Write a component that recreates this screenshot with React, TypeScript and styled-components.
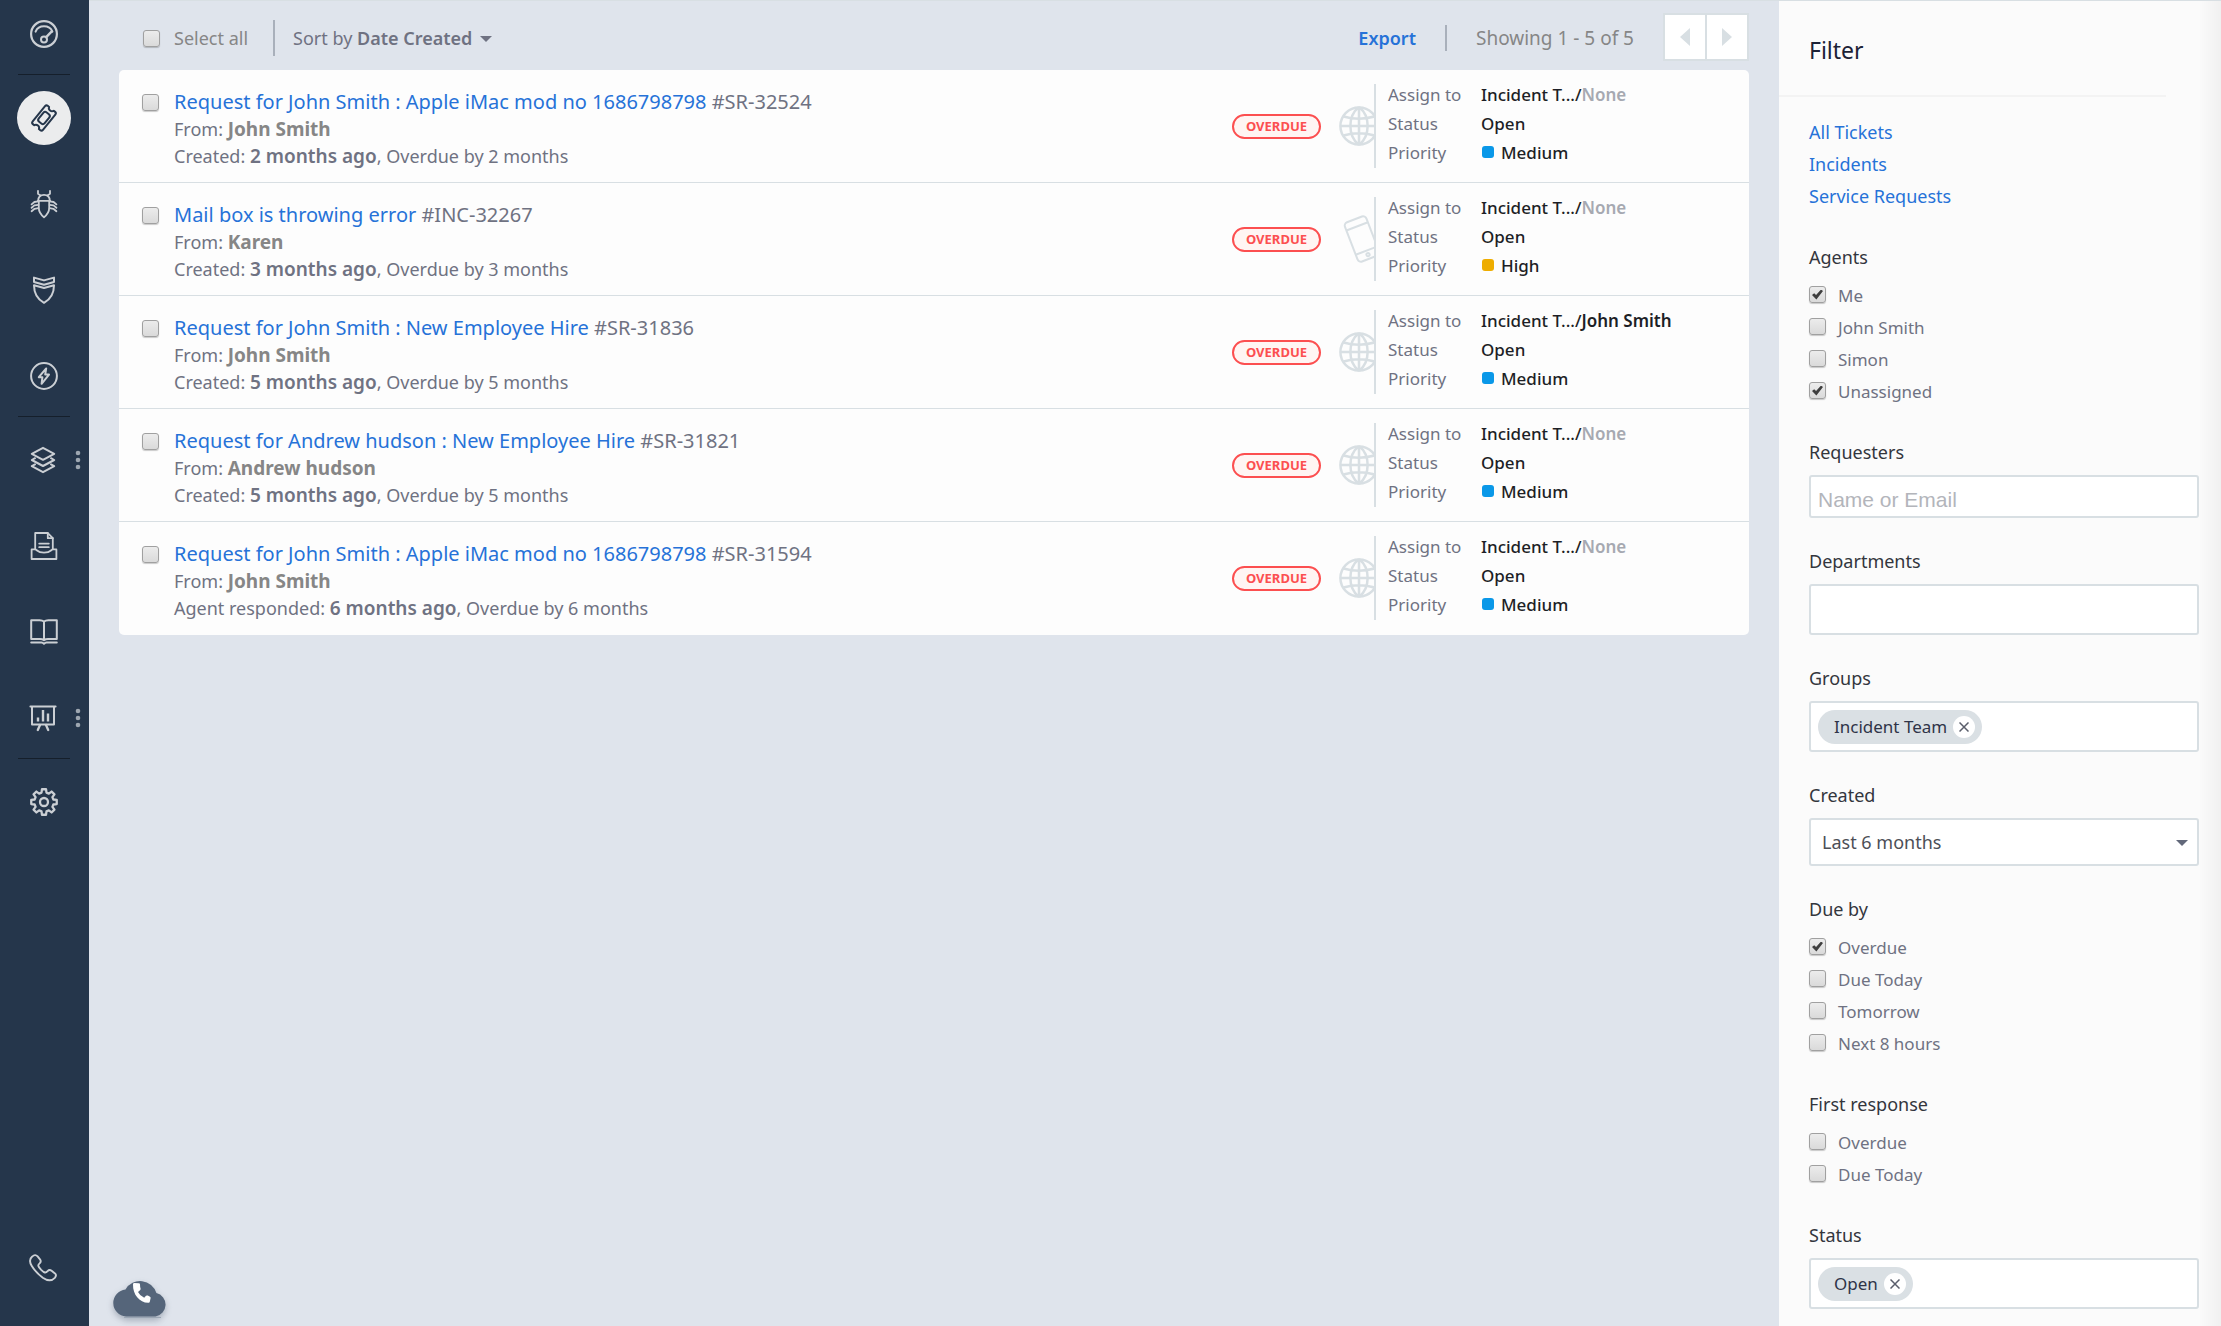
import React from 'react';
import styled, { createGlobalStyle, css } from 'styled-components';

const color = {
  navy: '#25364b',
  icon: '#cbcfd4',
  page: '#dfe4ec',
  card: '#fdfdfd',
  panel: '#fbfbfb',
  line: '#d8dfe3',
  rule: '#a9b0bb',
  link: '#2672d8',
  text: '#6f7282',
  muted: '#868686',
  faint: '#a6a9b1',
  ink: '#1d1f26',
  heading: '#33363d',
  danger: '#fc4f50',
};

const GlobalStyle = createGlobalStyle`
  *, *::before, *::after { box-sizing: border-box; }
  body {
    margin: 0;
    background: ${color.page};
    font-family: "Noto Sans", "Open Sans", sans-serif;
    font-size: 18px;
    line-height: 27px;
    color: ${color.text};
  }
  button, input, select { font: inherit; color: inherit; }
  button { padding: 0; border: 0; background: none; cursor: pointer; }
  a { color: ${color.link}; text-decoration: none; }
  h1, h2, p, ul, dl, dd, fieldset { margin: 0; padding: 0; border: 0; font-weight: 400; }
  ul { list-style: none; }
`;

const Page = styled.div`
  display: flex;
  height: 100vh;
  overflow: hidden;
`;

/* ---------- navigation rail ---------- */

const Rail = styled.nav`
  flex: none;
  display: flex;
  flex-direction: column;
  width: 89px;
  padding-bottom: 15px;
  background: ${color.navy};
`;

const RailItem = styled.a<{ $menu?: boolean; $short?: boolean }>`
  position: relative;
  display: flex;
  align-items: center;
  justify-content: center;
  height: ${p => (p.$short ? 67 : 86)}px;
  padding-right: ${p => (p.$menu ? 4 : 1)}px;
  color: ${color.icon};
`;

const RailGroup = styled.div`
  display: flex;
  flex-direction: column;

  & + &::before {
    content: '';
    height: 1px;
    margin: 0 19px 0 18px;
    background: #151f2b;
  }
  ${RailItem}:nth-child(4) { margin-bottom: -3px; }
`;

const RailTop = styled(RailGroup)`
  height: 74px;
`;

const RailFoot = styled.div`
  margin-top: auto;
`;

const Active = styled.span`
  display: flex;
  align-items: center;
  justify-content: center;
  width: 54px;
  height: 54px;
  border-radius: 50%;
  background: #ebeced;
  color: ${color.navy};
`;

const Dots = styled.svg`
  position: absolute;
  right: 8px;
  top: 33px;
`;

const Glyph = styled.svg.attrs<{ strokeWidth?: number }>(p => ({
  viewBox: '0 0 28 28',
  fill: 'none',
  stroke: 'currentColor',
  strokeWidth: p.strokeWidth ?? 2,
  strokeLinejoin: 'round',
  strokeLinecap: 'round',
}))`
  width: 28px;
  height: 28px;
  overflow: visible;
`;

const gearPath = (() => {
  const pts: string[] = [];
  const put = (r: number, deg: number) => {
    const a = (deg * Math.PI) / 180;
    pts.push(`${(14 + r * Math.sin(a)).toFixed(2)} ${(14 - r * Math.cos(a)).toFixed(2)}`);
  };
  for (let i = 0; i < 8; i++) {
    const c = i * 45;
    put(9.7, c - 15);
    put(12.9, c - 9);
    put(12.9, c + 9);
    put(9.7, c + 15);
  }
  return `M${pts.join('L')}Z`;
})();

const icons = {
  gauge: (
    <Glyph>
      <circle cx="14" cy="14" r="12.9" strokeWidth="2.2" />
      <path d="M5.6 11.6C8.6 4.6 19.4 4.6 22.4 11.6" />
      <circle cx="14" cy="19.4" r="3" />
      <path d="M16.2 17.2 21.8 11.4" strokeWidth="2.4" />
    </Glyph>
  ),
  ticket: (
    <Glyph>
      <g transform="rotate(-51 14 14)">
        <path d="M4.2 7.4H23.8Q25.8 7.4 25.8 9.2V11C22.9 11.8 22.9 16.2 25.8 17V18.8Q25.8 20.6 23.8 20.6H4.2Q2.2 20.6 2.2 18.8V17C5.1 16.2 5.1 11.8 2.2 11V9.2Q2.2 7.4 4.2 7.4Z" />
        <rect x="8" y="10.2" width="12" height="7.6" rx="2.4" />
      </g>
    </Glyph>
  ),
  bug: (
    <Glyph strokeWidth={1.8}>
      <path d="M8.2 10.4C8.4 6.8 10.6 4.8 14 4.8S19.6 6.8 19.8 10.4" />
      <path d="M7.8 10.8H20.2" />
      <path d="M8.8 10.8V18C8.8 22 11.2 25 14 27.2C16.8 25 19.2 22 19.2 18V10.8" />
      <path d="M10.6 5.6 8 3.8V.8M17.4 5.6 20 3.8V.8" />
      <path d="M8.4 11.4 4.4 12 1.6 14.4M8.4 14.8 4.4 15.4 1.6 17.8M8.4 18.2 4.6 18.8 1.6 21.2M19.6 11.4 23.6 12 26.4 14.4M19.6 14.8 23.6 15.4 26.4 17.8M19.6 18.2 23.4 18.8 26.4 21.2" />
    </Glyph>
  ),
  shield: (
    <Glyph>
      <path d="M4 1.6 14 4.4 24 1.6V6L14 8.8 4 6Z" />
      <path d="M4 9.2 14 12 24 9.200C24 17.400 20.400 23.200 14 26.800C7.600 23.200 4 17.400 4 9.200Z" />
    </Glyph>
  ),
  bolt: (
    <Glyph>
      <circle cx="14" cy="14" r="12.9" />
      <path d="M16.2 6.4 8.8 15.2H12.4L11.6 21.8 19 12.6H15.2Z" />
    </Glyph>
  ),
  layers: (
    <Glyph>
      <path d="M14 1.8 25.2 7.8 14 13.8 2.8 7.8Z" />
      <path d="M6 12.2 2.8 14 14 20 25.2 14 22 12.2" />
      <path d="M6 18.4 2.8 20.2 14 26.2 25.2 20.2 22 18.4" />
    </Glyph>
  ),
  inbox: (
    <Glyph strokeWidth={1.8}>
      <path d="M5.2 17V1H17.8L22.8 6.2V17" />
      <path d="M17.8 1V6.2H22.8" />
      <path d="M9.2 11.6H18.8M9.2 15.2H18.8" />
      <path d="M5.2 17.4H1.6V27H26.4V17.4H22.8C21.2 17.4 20.8 20.6 14 20.6S6.8 17.4 5.2 17.4Z" />
    </Glyph>
  ),
  book: (
    <Glyph>
      <path d="M14 3.6C12.6 2.4 11.4 2.2 9.6 2.2H1.2V21H10C12 21 13 21.4 14 22.2C15 21.4 16 21 18 21H26.8V2.2H18.4C16.6 2.2 15.4 2.4 14 3.6ZM14 3.6V22" />
      <path d="M1.2 24.6H11.4Q13 24.6 14 25.8Q15 24.6 16.6 24.6H26.8" />
    </Glyph>
  ),
  board: (
    <Glyph>
      <path d="M1.4 2.4H26.6M3 2.4V20.6H25V2.4" />
      <path d="M9 17.4V13.6M14 17.4V6M19 17.4V9.4" strokeWidth="2.4" strokeLinecap="butt" />
      <path d="M11 21 8.8 26M17 21 19.2 26" strokeWidth="2.3" />
    </Glyph>
  ),
  gear: (
    <Glyph strokeWidth={2.3}>
      <path d={gearPath} />
      <circle cx="14" cy="14" r="4" />
    </Glyph>
  ),
  phone: (
    <Glyph strokeWidth={1.9}>
      <path d="M3.2 2.6Q6.2-.2 8.6 2.4L11 5.4Q12.6 7.4 10.6 9.4C8.4 11.4 9 12.4 12.2 15.8C15.4 19 16.6 19.4 18.6 17.2Q20.4 15.2 22.6 16.8L26 19.4Q28 21.2 25.8 23.8C22.6 27.2 18.6 27.2 13.8 23.8C9.6 20.6 5.4 16.2 2.8 12C.4 8.2.6 4.8 3.2 2.6Z" />
    </Glyph>
  ),
};

const MenuDots = () => (
  <Dots width="6" height="20" viewBox="0 0 6 20" fill="#9ea7b1">
    <circle cx="3" cy="3" r="2.3" />
    <circle cx="3" cy="10" r="2.3" />
    <circle cx="3" cy="17" r="2.3" />
  </Dots>
);

/* ---------- shared form parts ---------- */

const Tick = styled.input.attrs({ type: 'checkbox' })`
  appearance: none;
  flex: none;
  display: grid;
  place-items: center;
  width: 17px;
  height: 17px;
  margin: 0;
  border: 1px solid #a0a0a0;
  border-radius: 3px;
  background: linear-gradient(#ececec, #dadada);
  box-shadow: 0 1px 1px rgba(0, 0, 0, 0.2);

  &:checked::before {
    content: '';
    width: 11px;
    height: 10px;
    background: #3f3f3f;
    clip-path: polygon(0 56%, 20% 38%, 37% 56%, 82% 0, 100% 16%, 40% 100%);
  }
`;

const Caret = styled.span`
  border: 6px solid transparent;
  border-top-color: currentColor;
  border-bottom: 0;
`;

/* ---------- ticket list ---------- */

const Main = styled.main`
  flex: 1;
  min-width: 0;
  padding: 0 30px;
  border-top: 1px solid ${color.line};
`;

const Toolbar = styled.div`
  display: flex;
  align-items: center;
  height: 69px;
  padding: 6px 0 0 24px;
`;

const SelectAll = styled.label`
  display: flex;
  align-items: center;
  gap: 14px;
  color: ${color.muted};
`;

const Rule = styled.span<{ $tall?: boolean }>`
  width: 2px;
  height: ${p => (p.$tall ? 36 : 26)}px;
  margin: 0 ${p => (p.$tall ? 18 : 29)}px 2px ${p => (p.$tall ? 25 : 29)}px;
  background: ${color.rule};
`;

const SortButton = styled.button`
  display: flex;
  align-items: center;
  gap: 8px;

  b { font-weight: 600; }
`;

const ExportLink = styled.a`
  margin-left: auto;
  font-weight: 600;
`;

const Showing = styled.span`
  margin-right: 29px;
  font-size: 19px;
  color: ${color.muted};
`;

const Pager = styled.div`
  display: flex;
  gap: 2px;
  margin-bottom: 4px;
  padding: 2px;
  background: ${color.line};
`;

const PageButton = styled.button`
  display: grid;
  place-items: center;
  width: 40px;
  height: 44px;
  background: #fff;
  color: ${color.line};
`;

const Tickets = styled.ul`
  border-radius: 5px;
  background: ${color.card};
`;

const Ticket = styled.li`
  display: flex;
  height: 113px;
  padding-left: 23px;
  border-bottom: 1px solid ${color.line};

  &:last-child { border-bottom-color: transparent; }
`;

const TickCell = styled.div`
  width: 32px;
  padding-top: 24px;
`;

const Summary = styled.div`
  flex: 1;
  min-width: 0;
  padding-top: 18px;
`;

const Title = styled.h2`
  font-size: 20px;
  line-height: 28px;
`;

const Requester = styled.b`
  font-size: 19px;
  font-weight: 700;
  color: ${color.muted};
`;

const Age = styled.b`
  font-size: 19px;
  font-weight: 600;
`;

const Overdue = styled.span`
  align-self: center;
  width: 89px;
  margin-right: 18px;
  border: 2px solid ${color.danger};
  border-radius: 13px;
  background: #fff5f3;
  font-size: 13px;
  font-weight: 700;
  line-height: 21px;
  text-align: center;
  color: ${color.danger};
`;

const Source = styled.span`
  align-self: center;
  width: 35px;
  height: 50px;
  overflow: hidden;
  color: ${color.line};

  svg { display: block; }
`;

const Facts = styled.dl`
  position: relative;
  display: grid;
  grid-template-columns: 93px 1fr;
  align-content: start;
  width: 375px;
  padding: 10px 0 0 14px;
  font-size: 17px;
  line-height: 29px;

  &::before {
    content: '';
    position: absolute;
    left: 0;
    top: 14px;
    bottom: 14px;
    width: 2px;
    background: ${color.line};
  }
`;

const Fact = styled.dd`
  display: flex;
  align-items: center;
  font-weight: 500;
  color: ${color.ink};
`;

const Agent = styled.span<{ $none: boolean }>`
  font-weight: 600;
  color: ${p => (p.$none ? color.faint : 'inherit')};
`;

const Swatch = styled.span<{ $high: boolean }>`
  width: 12px;
  height: 12px;
  margin: 0 7px 2px 1px;
  border-radius: 3px;
  background: ${p => (p.$high ? '#eead00' : '#0a98e8')};
`;

const Globe = () => (
  <svg width="42" height="50" viewBox="0 0 42 50" fill="none" stroke="currentColor" strokeWidth="2.5">
    <circle cx="20" cy="25" r="18.6" />
    <path d="M1 25H39M20 6V44M4.5 15.5Q20 20 35.5 15.5M4.5 34.5Q20 30 35.5 34.500" />
    <path d="M20 6C8.5 15 8.5 35 20 44M20 6C31.5 15 31.5 35 20 44" />
  </svg>
);

const Handset = () => (
  <svg width="42" height="50" viewBox="0 0 42 50" fill="none" stroke="currentColor" strokeWidth="2">
    <g transform="rotate(-21 23 25)">
      <rect x="11.5" y="4" width="23" height="42" rx="3.5" />
      <path d="M11.5 11.5H34.5M11.5 37.5H34.5" />
      <circle cx="23" cy="41.8" r="1.6" />
    </g>
  </svg>
);

interface TicketData {
  title: string;
  id: string;
  from: string;
  event: string;
  age: string;
  due: string;
  agent?: string;
  high?: boolean;
}

const tickets: TicketData[] = [
  { title: 'Request for John Smith : Apple iMac mod no 1686798798', id: '#SR-32524', from: 'John Smith', event: 'Created:', age: '2 months ago', due: 'Overdue by 2 months' },
  { title: 'Mail box is throwing error', id: '#INC-32267', from: 'Karen', event: 'Created:', age: '3 months ago', due: 'Overdue by 3 months', high: true },
  { title: 'Request for John Smith : New Employee Hire', id: '#SR-31836', from: 'John Smith', event: 'Created:', age: '5 months ago', due: 'Overdue by 5 months', agent: 'John Smith' },
  { title: 'Request for Andrew hudson : New Employee Hire', id: '#SR-31821', from: 'Andrew hudson', event: 'Created:', age: '5 months ago', due: 'Overdue by 5 months' },
  { title: 'Request for John Smith : Apple iMac mod no 1686798798', id: '#SR-31594', from: 'John Smith', event: 'Agent responded:', age: '6 months ago', due: 'Overdue by 6 months' },
];

const TicketRow = ({ t }: { t: TicketData }) => (
  <Ticket>
    <TickCell>
      <Tick aria-label={t.id} />
    </TickCell>
    <Summary>
      <Title>
        <a href="#ticket">{t.title}</a> {t.id}
      </Title>
      <p>
        From: <Requester>{t.from}</Requester>
      </p>
      <p>
        {t.event} <Age>{t.age}</Age>, {t.due}
      </p>
    </Summary>
    <Overdue>OVERDUE</Overdue>
    <Source>{t.high ? <Handset /> : <Globe />}</Source>
    <Facts>
      <dt>Assign to</dt>
      <Fact>
        Incident T.../<Agent $none={!t.agent}>{t.agent ?? 'None'}</Agent>
      </Fact>
      <dt>Status</dt>
      <Fact>Open</Fact>
      <dt>Priority</dt>
      <Fact>
        <Swatch $high={!!t.high} />
        {t.high ? 'High' : 'Medium'}
      </Fact>
    </Facts>
  </Ticket>
);

/* ---------- filter panel ---------- */

const Panel = styled.aside`
  flex: none;
  width: 442px;
  border-top: 1px solid ${color.line};
  background: linear-gradient(to left, #f0f0f0, ${color.panel} 22px);
`;

const PanelHead = styled.header`
  height: 96px;
  margin-right: 55px;
  padding: 33px 30px 0;
  border-bottom: 2px solid #f3f3f3;
`;

const PanelTitle = styled.h1`
  font-size: 23px;
  line-height: 32px;
  color: #1c2236;
`;

const PanelBody = styled.form`
  display: flex;
  flex-direction: column;
  gap: 29px;
  padding: 19px 22px 16px 30px;
`;

const Links = styled.ul`
  margin-bottom: 2px;
  line-height: 32px;
`;

const CheckGroup = styled.fieldset`
  min-width: 0;
  padding-bottom: 1px;
`;

const Legend = styled.legend`
  margin-bottom: 9px;
  padding: 0;
  line-height: 28px;
  color: ${color.heading};
`;

const CheckLine = styled.label`
  display: flex;
  align-items: center;
  gap: 12px;
  font-size: 17px;
  line-height: 32px;

  ${Tick} { margin-bottom: 3px; }
`;

const Field = styled.div`
  display: flex;
  flex-direction: column;
  gap: 9px;
`;

const FieldLabel = styled.label`
  line-height: 28px;
  color: ${color.heading};
`;

const control = css`
  width: 100%;
  border: 2px solid ${color.line};
  border-radius: 3px;
  background: #fff;
`;

const TextInput = styled.input`
  ${control}
  height: 43px;
  padding: 6px 7px 0;
  font-family: "Liberation Sans", Arial, sans-serif;
  font-size: 21px;

  &::placeholder { color: #b3b5bb; opacity: 1; }
`;

const TagBox = styled.div`
  ${control}
  display: flex;
  align-items: center;
  height: 51px;
  padding: 0 7px;

  input {
    flex: 1;
    min-width: 0;
    height: 34px;
    padding: 0;
    border: 0;
    outline: 0;
    background: none;
  }
`;

const Tag = styled.span`
  display: flex;
  align-items: center;
  gap: 6px;
  height: 34px;
  padding: 0 7px 0 16px;
  border-radius: 17px;
  background: #dae0e4;
  font-size: 17px;
  color: #2f3448;
`;

const Remove = styled.button`
  display: grid;
  place-items: center;
  width: 22px;
  height: 22px;
  border-radius: 50%;
  background: #fff;
  color: #5a5e6b;
`;

const SelectBox = styled.div`
  position: relative;

  select {
    ${control}
    appearance: none;
    display: block;
    height: 48px;
    padding: 0 32px 0 11px;
    color: #4c4f57;
  }
  ${Caret} {
    position: absolute;
    right: 11px;
    top: 22px;
    color: #62687a;
    pointer-events: none;
  }
`;

const TagField = ({ name, tag }: { name: string; tag?: string }) => (
  <Field>
    <FieldLabel htmlFor={name}>{name}</FieldLabel>
    <TagBox>
      {tag && (
        <Tag>
          {tag}
          <Remove type="button" aria-label={`Remove ${tag}`}>
            <svg width="10" height="10" viewBox="0 0 10 10" stroke="currentColor" strokeWidth="1.5">
              <path d="M.5.5 9.5 9.5M9.5.5.5 9.5" />
            </svg>
          </Remove>
        </Tag>
      )}
      <input id={name} />
    </TagBox>
  </Field>
);

const Checks = ({ name, items, on = [] }: { name: string; items: string[]; on?: string[] }) => (
  <CheckGroup>
    <Legend>{name}</Legend>
    {items.map(item => (
      <CheckLine key={item}>
        <Tick defaultChecked={on.includes(item)} />
        {item}
      </CheckLine>
    ))}
  </CheckGroup>
);

/* ---------- floating call widget ---------- */

const CallCloud = styled.button`
  position: fixed;
  left: 113px;
  bottom: 6px;
  width: 54px;
  height: 40px;
  filter: drop-shadow(0 3px 3px rgba(60, 75, 95, 0.35));

  svg { display: block; }
`;

export default function App() {
  return (
    <Page>
      <GlobalStyle />
      <Rail>
        <RailTop>
          <RailItem href="#dashboard" aria-label="Dashboard" $short>{icons.gauge}</RailItem>
        </RailTop>
        <RailGroup>
          <RailItem href="#tickets" aria-label="Tickets"><Active>{icons.ticket}</Active></RailItem>
          <RailItem href="#problems" aria-label="Problems">{icons.bug}</RailItem>
          <RailItem href="#changes" aria-label="Changes">{icons.shield}</RailItem>
          <RailItem href="#releases" aria-label="Releases">{icons.bolt}</RailItem>
        </RailGroup>
        <RailGroup>
          <RailItem href="#assets" aria-label="Assets" $menu>{icons.layers}<MenuDots /></RailItem>
          <RailItem href="#contracts" aria-label="Contracts">{icons.inbox}</RailItem>
          <RailItem href="#solutions" aria-label="Solutions">{icons.book}</RailItem>
          <RailItem href="#reports" aria-label="Reports" $menu>{icons.board}<MenuDots /></RailItem>
        </RailGroup>
        <RailGroup>
          <RailItem href="#admin" aria-label="Admin">{icons.gear}</RailItem>
        </RailGroup>
        <RailFoot>
          <RailItem href="#phone" aria-label="Phone" $menu>{icons.phone}</RailItem>
        </RailFoot>
      </Rail>

      <Main>
        <Toolbar>
          <SelectAll>
            <Tick />
            Select all
          </SelectAll>
          <Rule $tall />
          <SortButton type="button">
            <span>Sort by <b>Date Created</b></span>
            <Caret />
          </SortButton>
          <ExportLink href="#export">Export</ExportLink>
          <Rule />
          <Showing>Showing 1 - 5 of 5</Showing>
          <Pager>
            <PageButton type="button" aria-label="Previous page">
              <svg width="10" height="18" viewBox="0 0 10 18" fill="currentColor"><path d="M10 0V18L0 9Z" /></svg>
            </PageButton>
            <PageButton type="button" aria-label="Next page">
              <svg width="10" height="18" viewBox="0 0 10 18" fill="currentColor"><path d="M0 0V18L10 9Z" /></svg>
            </PageButton>
          </Pager>
        </Toolbar>
        <Tickets>
          {tickets.map(t => <TicketRow key={t.id} t={t} />)}
        </Tickets>
      </Main>

      <Panel>
        <PanelHead>
          <PanelTitle>Filter</PanelTitle>
        </PanelHead>
        <PanelBody>
          <Links>
            <li><a href="#all">All Tickets</a></li>
            <li><a href="#incidents">Incidents</a></li>
            <li><a href="#requests">Service Requests</a></li>
          </Links>
          <Checks name="Agents" items={['Me', 'John Smith', 'Simon', 'Unassigned']} on={['Me', 'Unassigned']} />
          <Field>
            <FieldLabel htmlFor="requesters">Requesters</FieldLabel>
            <TextInput id="requesters" placeholder="Name or Email" />
          </Field>
          <TagField name="Departments" />
          <TagField name="Groups" tag="Incident Team" />
          <Field>
            <FieldLabel htmlFor="created">Created</FieldLabel>
            <SelectBox>
              <select id="created">
                <option>Last 6 months</option>
              </select>
              <Caret />
            </SelectBox>
          </Field>
          <Checks name="Due by" items={['Overdue', 'Due Today', 'Tomorrow', 'Next 8 hours']} on={['Overdue']} />
          <Checks name="First response" items={['Overdue', 'Due Today']} />
          <TagField name="Status" tag="Open" />
        </PanelBody>
      </Panel>

      <CallCloud type="button" aria-label="Call">
        <svg width="54" height="40" viewBox="0 0 54 40">
          <path fill="#55657a" d="M12.500 9.400A17 17 0 0 1 43.400 13A12 12 0 0 1 42.500 36.500H13A13.600 13.600 0 0 1 12.500 9.400Z" />
          <path stroke="#9aa5b3" d="M11 37.500H48" />
          <path fill="#fff" d="M20 4.400Q20 3 21.400 3L25.800 3.200Q27 3.200 27 4.400Q27 6.800 27.600 8.400Q27.800 9.400 27 10.200L25 12Q27 16 31.200 17.800L33 15.800Q33.800 15.200 34.800 15.600L36.600 16.400Q38 16.800 37.600 18.200L36.800 21.800Q36.600 23 35.200 22.800C26.400 22.400 19.800 14.600 20 4.400Z" />
        </svg>
      </CallCloud>
    </Page>
  );
}
